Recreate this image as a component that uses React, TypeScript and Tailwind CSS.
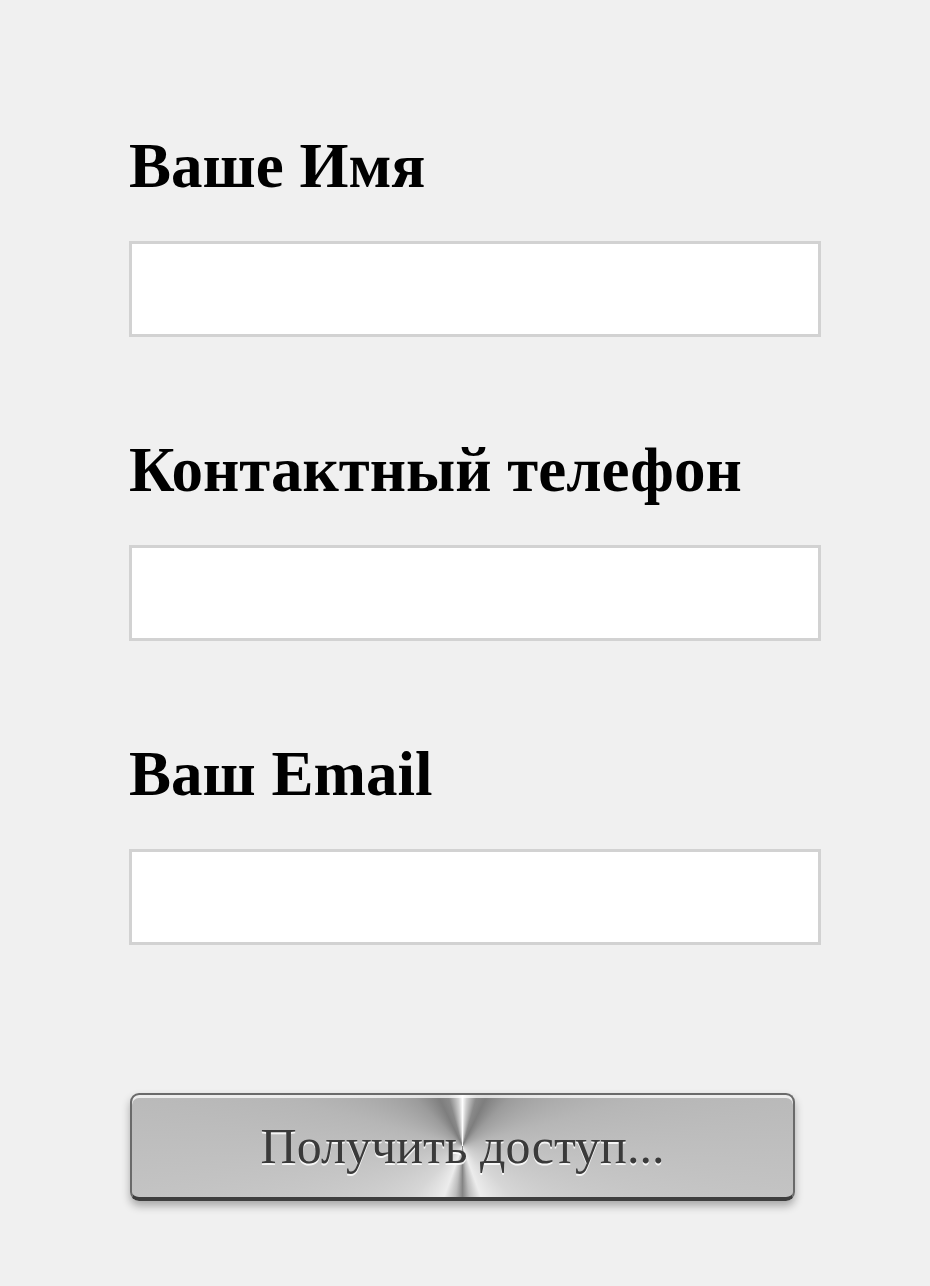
export default function App() {
    const fields = ["Ваше Имя", "Контактный телефон", "Ваш Email"];

    return (
        <div className="min-h-[1286px] bg-[#f0f0f0] pt-[130px] pl-[129px] font-['Liberation_Serif',serif]">
            <form className="w-[692px] flex flex-col" autoComplete="off">
                {fields.map((label) => (
                    <div key={label} className="flex flex-col mb-[97px]">
                        <label className="text-[63px] leading-[72px] font-bold text-black">
                            {label}
                        </label>
                        <input
                            type="text"
                            className="mt-[39px] h-[96px] bg-white border-[3px] border-[#d2d2d2] outline-none"
                        />
                    </div>
                ))}
                <button
                    type="button"
                    className="mt-[51px] ml-[1px] w-[665px] h-[108px] rounded-[9px] border-[2px] border-[#6a6a6a] border-b-[4px] border-b-[#3e3e3e] shadow-[0_5px_8px_rgba(0,0,0,0.3),inset_0_3px_0_rgba(255,255,255,0.75)] bg-[conic-gradient(from_0deg_at_50%_50%,#fdfdfd_0deg,#d0d0d0_5deg,#8a8a8a_16deg,#7e7e7e_26deg,#9c9c9c_45deg,#b6b6b6_75deg,#c4c4c4_100deg,#d6d6d6_135deg,#ececec_160deg,#bdbdbd_172deg,#858585_180deg,#bdbdbd_188deg,#ececec_200deg,#d6d6d6_225deg,#c4c4c4_260deg,#b6b6b6_285deg,#9c9c9c_315deg,#7e7e7e_334deg,#8a8a8a_344deg,#d0d0d0_355deg,#fdfdfd_360deg)] text-[50px] text-[#3a3a3a] [text-shadow:0_2px_0_rgba(255,255,255,0.85)]"
                >
                    Получить доступ...
                </button>
            </form>
        </div>
    );
}
